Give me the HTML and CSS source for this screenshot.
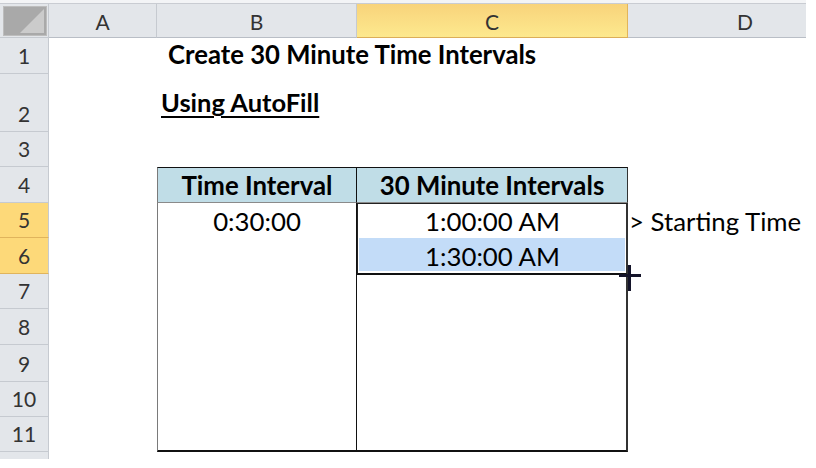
FILE: index.html
```html
<!DOCTYPE html>
<html>
<head>
<meta charset="utf-8">
<link rel="stylesheet" href="styles.css">
</head>
<body>
<div class="sheet">
  <div class="topstrip"></div>

  <div class="corner"><div class="corner-inner"><svg class="tri" width="24" height="24" viewBox="0 0 24 24"><polygon points="0,24 24,24 24,0" fill="#cbcbcb"/></svg></div></div>
  <div class="colhead">A</div>
  <div class="colhead">B</div>
  <div class="colhead colhead-sel">C</div>
  <div class="colhead colhead-d">D</div>
  <div class="blank"></div>

  <div class="rowhead r1">1</div>
  <div class="rowhead r2">2</div>
  <div class="rowhead r3">3</div>
  <div class="rowhead r4">4</div>
  <div class="rowhead rowhead-sel r5">5</div>
  <div class="rowhead rowhead-sel r6">6</div>
  <div class="rowhead r7">7</div>
  <div class="rowhead r8">8</div>
  <div class="rowhead r9">9</div>
  <div class="rowhead r10">10</div>
  <div class="rowhead r11">11</div>
  <div class="rowhead r12"></div>

  <div class="title">Create 30 Minute Time Intervals</div>
  <div class="subtitle"><span>Using AutoFill</span></div>

  <div class="th th-b">Time Interval</div>
  <div class="th th-c">30 Minute Intervals</div>
  <div class="tb tb-b"></div>
  <div class="tb tb-c"></div>

  <div class="cell val-b5">0:30:00</div>
  <div class="cell val-c5">1:00:00 AM</div>
  <div class="cell val-c6">1:30:00 AM</div>
  <div class="selection"></div>
  <div class="cell note-d5">&gt; Starting Time</div>

  <svg class="fillcursor" width="22" height="26" viewBox="0 0 22 26"><rect x="9" y="0" width="3" height="26" fill="#14142a"/><rect x="0" y="9" width="22" height="3" fill="#14142a"/></svg>
</div>
</body>
</html>
```

FILE: styles.css
```css
html, body {
  margin: 0;
  padding: 0;
  background: #ffffff;
}

.sheet {
  position: relative;
  display: grid;
  grid-template-columns: 49px 108px 200px 271px 178px 10px;
  grid-template-rows: 4px 34px 36px 58px 35px 36px 35px 36px 35px 36px 37px 35px 35px 7px;
  width: 816px;
  font-family: Lato, "Liberation Sans", sans-serif;
  color: #000;
}

.topstrip {
  grid-column: 1 / 6;
  grid-row: 1;
  background: #f3f4f6;
  border-bottom: 1px solid #c9ccd2;
  box-sizing: border-box;
}

.corner {
  grid-column: 1;
  grid-row: 2;
  background: #e3e6ea;
  border-right: 1px solid #c6cad0;
  border-bottom: 1px solid #c6cad0;
  box-sizing: border-box;
  padding: 2px 1px 1px 3px;
}
.corner-inner {
  width: 100%;
  height: 100%;
  background: #a9a9a9;
  border: 1px solid #bdbdbd;
  box-sizing: border-box;
  display: flex;
  align-items: flex-end;
  justify-content: flex-end;
  padding: 0 2px 2px 0;
}
.tri { display: block; }

.colhead {
  grid-row: 2;
  background: #e3e6ea;
  border-right: 1px solid #c6cad0;
  border-bottom: 1px solid #b9bec6;
  box-sizing: border-box;
  display: flex;
  align-items: center;
  justify-content: center;
  font-size: 21px;
  color: #333;
  padding-top: 2px;
  overflow: hidden;
}
.colhead-sel {
  background: linear-gradient(#f8d37b, #fde98e);
  border-right: 1px solid #e2b55a;
  border-bottom: 1px solid #dcae59;
}
.colhead-d {
  padding-left: 56px;
  border-right: none;
}
.blank {
  grid-row: 2;
  grid-column: 6;
}

.rowhead {
  grid-column: 1;
  background: #e3e6ea;
  border-right: 1px solid #c6cad0;
  border-bottom: 1px solid #c6cad0;
  box-sizing: border-box;
  display: flex;
  align-items: flex-end;
  justify-content: center;
  font-size: 21px;
  color: #333;
  padding-bottom: 5px;
  line-height: 24px;
}
.rowhead-sel {
  background: #fdd979;
  border-bottom: 1px solid #e0b45c;
}
.r1 { grid-row: 3; }
.r2 { grid-row: 4; }
.r3 { grid-row: 5; }
.r4 { grid-row: 6; }
.r5 { grid-row: 7; }
.r6 { grid-row: 8; }
.r7 { grid-row: 9; }
.r8 { grid-row: 10; }
.r9 { grid-row: 11; }
.r10 { grid-row: 12; }
.r11 { grid-row: 13; }
.r12 { grid-row: 14; border-bottom: none; }

.title {
  grid-column: 3 / 6;
  grid-row: 3;
  font-weight: bold;
  font-size: 25.7px;
  display: flex;
  align-items: flex-end;
  padding: 0 0 5px 11px;
  line-height: 30px;
  white-space: nowrap;
}
.subtitle {
  grid-column: 3 / 5;
  grid-row: 4;
  font-weight: bold;
  font-size: 25.5px;
  display: flex;
  align-items: flex-end;
  padding: 0 0 15px 4px;
  line-height: 30px;
  white-space: nowrap;
}
.subtitle span {
  text-decoration: underline;
  text-underline-offset: 4px;
  text-decoration-thickness: 2px;
}

.th {
  grid-row: 6;
  background: #c0dde7;
  border-top: 1px solid #111;
  border-bottom: 1px solid #8a8a8a;
  box-sizing: border-box;
  display: flex;
  align-items: flex-end;
  justify-content: center;
  font-weight: bold;
  font-size: 25.8px;
  line-height: 30px;
  padding-bottom: 2px;
  white-space: nowrap;
}
.th-b {
  grid-column: 3;
  border-left: 1px solid #7a7a7a;
  border-right: 1px solid #111;
}
.th-c {
  grid-column: 4;
  border-right: 1px solid #333;
}
.tb {
  grid-row: 7 / 14;
  border-bottom: 2px solid #111;
  box-sizing: border-box;
}
.tb-b {
  grid-column: 3;
  border-left: 1px solid #7a7a7a;
  border-right: 1px solid #111;
}
.tb-c {
  grid-column: 4;
  border-right: 2px solid #333;
}

.cell {
  font-size: 25.8px;
  line-height: 30px;
  display: flex;
  align-items: flex-end;
  padding-bottom: 2px;
  white-space: nowrap;
  z-index: 1;
}
.val-b5 {
  grid-column: 3;
  grid-row: 7;
  justify-content: center;
}
.val-c5 {
  grid-column: 4;
  grid-row: 7;
  justify-content: center;
}
.val-c6 {
  grid-column: 4;
  grid-row: 8;
  justify-content: center;
  background: #c3dcf8;
  margin: 0 2px 3px 2px;
  padding-bottom: 0;
}
.note-d5 {
  grid-column: 5 / 7;
  grid-row: 7;
  padding-left: 1px;
}
.selection {
  grid-column: 4;
  grid-row: 7 / 9;
  border: 1px solid #222;
  border-bottom: 2px solid #111;
  border-right: 2px solid #333;
  box-shadow: inset 0 0 0 1px #fff;
  box-sizing: border-box;
  z-index: 2;
  margin-bottom: -1px;
}
.fillcursor {
  position: absolute;
  left: 619px;
  top: 265px;
  z-index: 3;
}
```
